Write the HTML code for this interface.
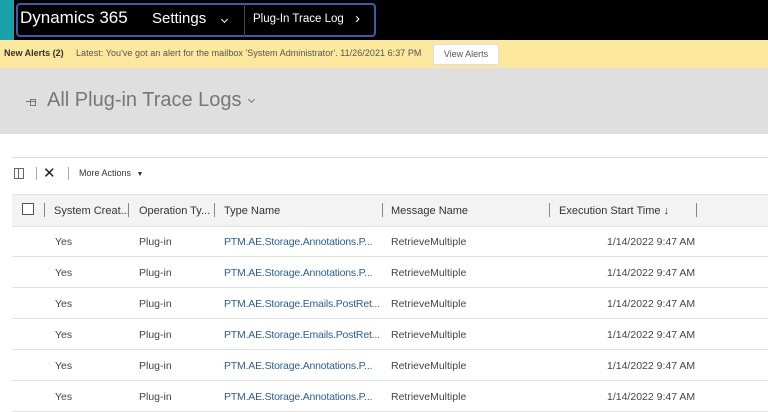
<html><head><style>
body{margin:0;width:768px;height:411px;overflow:hidden;background:#fff;font-family:"Liberation Sans",sans-serif;position:relative}
.a{position:absolute;white-space:nowrap}
.row{position:absolute;left:12px;width:756px;height:30px;border-bottom:1px solid #e2e2e2;font-size:10.5px;color:#444}
.row span{position:absolute;top:10px}
.l{color:#2a5d9a;letter-spacing:-0.2px}
.sep{position:absolute;width:1px;background:#888;height:14px;top:8px}
.chev{position:absolute;width:4px;height:4px;border-right:1.5px solid;border-bottom:1.5px solid;transform:rotate(45deg)}
</style></head><body>
<div class="a" style="left:0;top:0;width:768px;height:40px;background:#000"></div>
<div class="a" style="left:0;top:0;width:14px;height:40px;background:#1aa0a8"></div>
<div class="a" style="left:16px;top:3px;width:356px;height:30px;border:2px solid #3a5fa8;border-radius:4px"></div>
<div class="a" style="left:244px;top:3px;width:1px;height:34px;background:#444"></div>
<div class="a" style="left:20px;top:8px;color:#fff;font-size:17px">Dynamics 365</div>
<div class="a" style="left:152px;top:10px;color:#fff;font-size:15px">Settings</div>
<div class="chev" style="left:222px;top:17px;color:#fff"></div>
<div class="a" style="left:253px;top:13px;color:#fff;font-size:11.5px">Plug-In Trace Log</div>
<div class="a" style="left:355px;top:10px;color:#fff;font-size:15px">&#8250;</div>
<div class="a" style="left:0;top:40px;width:768px;height:28px;background:#fbe89c"></div>
<div class="a" style="left:4px;top:48px;font-size:9px;font-weight:bold;color:#333">New Alerts (2)</div>
<div class="a" style="left:76px;top:48px;font-size:9px;color:#555;letter-spacing:0.05px">Latest: You've got an alert for the mailbox 'System Administrator'. 11/26/2021 6:37 PM</div>
<div class="a" style="left:433px;top:44px;width:64px;height:19px;background:#fff;border:1px solid #ddd;font-size:9px;color:#555;text-align:center;line-height:19px">View Alerts</div>
<div class="a" style="left:0;top:68px;width:768px;height:66px;background:#dfdfdf"></div>
<div class="a" style="left:26px;top:101px;width:10px;height:1px;background:#777"></div>
<div class="a" style="left:30px;top:99px;width:4px;height:5px;border:1px solid #777"></div>
<div class="a" style="left:47px;top:89px;font-size:20px;color:#777">All Plug-in Trace Logs</div>
<div class="chev" style="left:249px;top:97px;color:#777"></div>
<div class="a" style="left:12px;top:157px;width:756px;height:1px;background:#ddd"></div>
<div class="a" style="left:14px;top:168px;width:10px;height:11px;border:1px solid #666;box-sizing:border-box"></div>
<div class="a" style="left:18px;top:168px;width:1px;height:11px;background:#666"></div>
<div class="a" style="left:36px;top:167px;width:1px;height:13px;background:#aaa"></div>
<div class="a" style="left:43px;top:164px;font-size:15px;color:#222">&#10005;</div>
<div class="a" style="left:68px;top:167px;width:1px;height:13px;background:#aaa"></div>
<div class="a" style="left:79px;top:168px;font-size:9px;color:#333">More Actions <span style="font-size:7px;margin-left:3px">&#9660;</span></div>
<div class="row" style="top:194px;height:31px;background:#f3f3f3;border-top:1px solid #e2e2e2;color:#333;font-size:11px">
<span style="left:10px;top:8px;width:10px;height:10px;border:1px solid #555;background:#fff"></span>
<div class="sep" style="left:32px"></div><span style="left:42px">System Creat...</span>
<div class="sep" style="left:116px"></div><span style="left:127px">Operation Ty...</span>
<div class="sep" style="left:202px"></div><span style="left:212px">Type Name</span>
<div class="sep" style="left:370px"></div><span style="left:379px">Message Name</span>
<div class="sep" style="left:537px"></div><span style="left:547px">Execution Start Time &#8595;</span>
<div class="sep" style="left:684px"></div>
</div>
<div class="row" style="top:226px"><span style="left:43px">Yes</span><span style="left:127px">Plug-in</span><span class="l" style="left:212px">PTM.AE.Storage.Annotations.P...</span><span style="left:379px">RetrieveMultiple</span><span style="left:595px">1/14/2022 9:47 AM</span></div>
<div class="row" style="top:257px"><span style="left:43px">Yes</span><span style="left:127px">Plug-in</span><span class="l" style="left:212px">PTM.AE.Storage.Annotations.P...</span><span style="left:379px">RetrieveMultiple</span><span style="left:595px">1/14/2022 9:47 AM</span></div>
<div class="row" style="top:288px"><span style="left:43px">Yes</span><span style="left:127px">Plug-in</span><span class="l" style="left:212px">PTM.AE.Storage.Emails.PostRet...</span><span style="left:379px">RetrieveMultiple</span><span style="left:595px">1/14/2022 9:47 AM</span></div>
<div class="row" style="top:319px"><span style="left:43px">Yes</span><span style="left:127px">Plug-in</span><span class="l" style="left:212px">PTM.AE.Storage.Emails.PostRet...</span><span style="left:379px">RetrieveMultiple</span><span style="left:595px">1/14/2022 9:47 AM</span></div>
<div class="row" style="top:350px"><span style="left:43px">Yes</span><span style="left:127px">Plug-in</span><span class="l" style="left:212px">PTM.AE.Storage.Annotations.P...</span><span style="left:379px">RetrieveMultiple</span><span style="left:595px">1/14/2022 9:47 AM</span></div>
<div class="row" style="top:381px"><span style="left:43px">Yes</span><span style="left:127px">Plug-in</span><span class="l" style="left:212px">PTM.AE.Storage.Annotations.P...</span><span style="left:379px">RetrieveMultiple</span><span style="left:595px">1/14/2022 9:47 AM</span></div>
</body></html>
